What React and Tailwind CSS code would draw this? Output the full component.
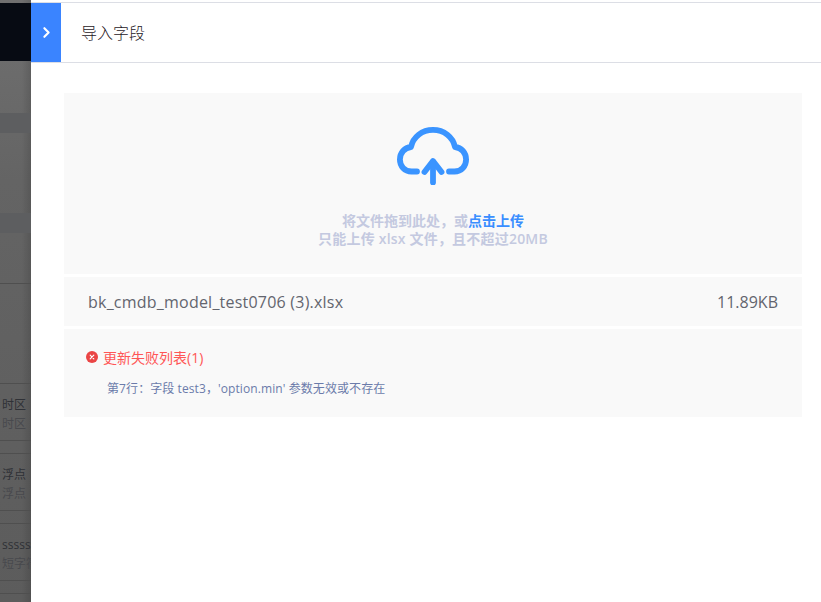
import { ChevronRight } from "lucide-react";

const font = { fontFamily: '"Open Sans", "Noto Sans CJK SC", sans-serif' };

// dimmed page behind the slider
function BackRow({ title, sub }) {
    return (
        <div className="h-[57px] shrink-0 border-b border-[#4f4f4f] pt-[11px] pl-[2px] whitespace-nowrap overflow-hidden">
            <div className="text-[12px] leading-[19px] text-[#2f3136]">{title}</div>
            <div className="text-[12px] leading-[19px] text-[#48494d]">{sub}</div>
        </div>
    );
}

function CloudIcon() {
    return (
        <svg width="72" height="58" viewBox="0 0 72 58" fill="none" stroke="#3a94ff" strokeWidth="5.8" strokeLinecap="round" strokeLinejoin="round">
            <path d="M20 44.500H14.500C7.500 44.500 2.900 39 2.900 32.500C2.900 26 7.500 20.500 14 20C16 10 25 2.900 36 2.900C47 2.900 56 10 58 20C64.500 20.500 69.100 26 69.100 32.500C69.100 39 64.500 44.500 57.500 44.500H52" />
            <path d="M27.500 45L36 34L44.500 45" />
            <path d="M36 35V55.500" />
        </svg>
    );
}

export default function App() {
    return (
        <div className="flex h-[602px] w-[821px] overflow-hidden bg-white" style={font}>
            {/* Backdrop strip */}
            <div className="w-[31px] shrink-0 flex flex-col pt-[3px] bg-[linear-gradient(90deg,transparent_70%,rgba(0,0,0,0.12)_100%),linear-gradient(180deg,#707070_0%,#646464_30%,#5c5c5c_100%)]">
                <div className="h-[58px] shrink-0 bg-[#070b13]" />
                <div className="h-[52px] shrink-0" />
                <div className="h-[20px] shrink-0 bg-[#5d5e60]" />
                <div className="h-[80px] shrink-0" />
                <div className="h-[20px] shrink-0 bg-[#5d5e60]" />
                <div className="h-[51px] shrink-0 border-b border-[#4f4f4f]" />
                <div className="h-[100px] shrink-0 border-b border-[#4f4f4f]" />
                <BackRow title="时区" sub="时区" />
                <div className="h-[13px] shrink-0 border-b border-[#4f4f4f]" />
                <BackRow title="浮点" sub="浮点" />
                <div className="h-[13px] shrink-0 border-b border-[#4f4f4f]" />
                <BackRow title="ssssssss" sub="短字符" />
                <div className="h-[13px] shrink-0 border-b border-[#4f4f4f]" />
            </div>

            {/* Slider panel */}
            <div className="flex-1 min-w-0 flex flex-col pt-[2px]">
                <div className="h-[61px] shrink-0 flex border-y border-[#dcdee5]">
                    <div className="w-[30px] flex items-center justify-center bg-[#3a84ff] text-white">
                        <ChevronRight size={17} strokeWidth={3} />
                    </div>
                    <div className="pl-[20px] flex items-center text-[16px] font-light text-[#1f2026]">导入字段</div>
                </div>

                <div className="pt-[30px] pl-[33px] pr-[19px] flex flex-col gap-[3px]">
                    <div className="h-[181px] bg-[#f9f9f9] flex flex-col items-center pt-[34px]">
                        <CloudIcon />
                        <div className="mt-[27px] text-center text-[14px] leading-[18px] font-semibold text-[#c4c9e0]">
                            <div>将文件拖到此处，或<span className="text-[#3a8eff]">点击上传</span></div>
                            <div className="tracking-[0.2px]">只能上传 xlsx 文件，且不超过20MB</div>
                        </div>
                    </div>

                    <div className="h-[49px] bg-[#f9f9f9] flex items-center justify-between px-[24px] text-[16px] text-[#63656e]">
                        <span className="tracking-[0.22px]">bk_cmdb_model_test0706 (3).xlsx</span>
                        <span>11.89KB</span>
                    </div>

                    <div className="h-[88px] bg-[#f9f9f9] pl-[22px] pt-[18px]">
                        <div className="flex items-center gap-[5px] h-[20px] text-[14px] text-[#ff5656]">
                            <svg width="12" height="12" viewBox="0 0 12 12">
                                <circle cx="6" cy="6" r="6" fill="#ea4545" />
                                <path d="M4.200 4.200L7.800 7.800M7.800 4.200L4.200 7.800" stroke="#fff" strokeWidth="1.200" strokeLinecap="round" />
                            </svg>
                            <span>更新失败列表(1)</span>
                        </div>
                        <div className="mt-[13px] pl-[21px] text-[12px] leading-[18px] tracking-[0.09px] text-[#6b7baa]">
                            第7行：字段 test3，'option.min' 参数无效或不存在
                        </div>
                    </div>
                </div>
            </div>
        </div>
    );
}
